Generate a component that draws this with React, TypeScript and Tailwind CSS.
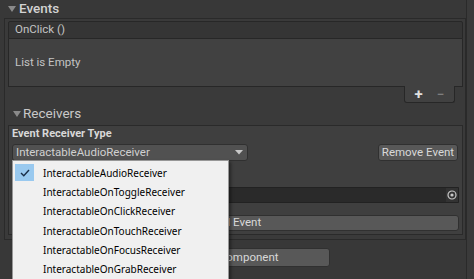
import React from "react";

const Tri = ({ className = "" }: { className?: string }) => (
  <svg width="8" height="7" viewBox="0 0 8 7" className={className}>
    <path d="M0 0 L8 0 L4 6 Z" fill="#8a8a8a" />
  </svg>
);

const items = [
  "InteractableAudioReceiver",
  "InteractableOnToggleReceiver",
  "InteractableOnClickReceiver",
  "InteractableOnTouchReceiver",
  "InteractableOnFocusReceiver",
  "InteractableOnGrabReceiver",
];

export default function App() {
  return (
    <div
      className="relative w-[474px] h-[279px] overflow-hidden bg-[#383838] text-[#c4c4c4]"
      style={{ fontFamily: "Roboto, 'Liberation Sans', sans-serif" }}
    >
      <div className="flex h-full">
        <div className="flex flex-col w-[466px]">
          {/* Events header */}
          <div className="h-[18px] flex items-center pl-[8px] gap-[3px]">
            <Tri />
            <span className="text-[13.5px] font-medium text-[#d2d2d2] leading-none">Events</span>
          </div>
          {/* outer box */}
          <div className="ml-[4px] h-[222px] border border-[#2a2a2a] bg-[#3a3a3a] flex flex-col pl-[3px] pr-[2px] pt-[2px]">
            {/* OnClick list */}
            <div className="h-[18px] bg-[#353535] border border-[#272727] rounded-t-[2px] flex items-center pl-[6px] text-[11.5px]">
              OnClick ()
            </div>
            <div className="h-[48px] bg-[#414141] border-l border-r border-b border-[#272727] flex items-center pl-[6px] text-[11.5px]">
              List is Empty
            </div>
            <div className="flex justify-end pr-[8px]">
              <div className="w-[51px] h-[17px] bg-[#414141] border-l border-r border-b border-[#272727] rounded-b-[3px] flex items-center justify-center gap-[14px] -mt-px">
                <span className="text-[#e0e0e0] text-[15px] leading-none font-bold">+</span>
                <span className="text-[#8a8a8a] text-[14px] leading-none">−</span>
              </div>
            </div>
            {/* Receivers header */}
            <div className="h-[20px] flex items-center pl-[5px] gap-[2px] mt-[1px]">
              <Tri />
              <span className="text-[13.5px] text-[#c8c8c8] leading-none">Receivers</span>
            </div>
            {/* inner box */}
            <div className="h-[110px] mt-[1px] bg-[#3f3f3f] border border-[#2a2a2a] flex flex-col pl-[3px] pr-[3px]">
              <div className="h-[17px] flex items-end pb-[1px] text-[11px] font-bold text-[#d8d8d8] whitespace-nowrap">
                Event Receiver Type
              </div>
              <div className="flex items-center h-[17px] mt-[1px]">
                <div className="w-[236px] shrink-0 h-[17px] bg-[#515151] border border-[#303030] rounded-[3px] flex items-center justify-between pl-[3px] pr-[4px] text-[11.5px] text-[#d0d0d0]">
                  <span className="whitespace-nowrap">InteractableAudioReceiver</span>
                  <svg width="8" height="5" viewBox="0 0 8 5">
                    <path d="M0 0 L8 0 L4 4.5 Z" fill="#c8c8c8" />
                  </svg>
                </div>
                <div className="flex-1" />
                <div className="w-[80px] shrink-0 whitespace-nowrap h-[17px] bg-[#585858] border border-[#303030] rounded-[3px] flex items-center justify-center text-[11.5px] text-[#d8d8d8] mr-[1px]">
                  Remove Event
                </div>
              </div>
              <div className="h-[26px]" />
              <div className="flex items-center h-[16px]">
                <div className="w-[100px]" />
                <div className="flex-1 h-[16px] bg-[#2a2a2a] border border-[#222] rounded-l-[3px] flex items-center justify-between pl-[8px] text-[11.5px] text-[#c8c8c8]">
                  <span className="whitespace-nowrap">None (Audio Clip)</span>
                  <span className="w-[12px] h-[14px] bg-[#333] flex items-center justify-center">
                    <svg width="10" height="10" viewBox="0 0 10 10">
                      <circle cx="5" cy="5" r="4" fill="none" stroke="#c8c8c8" strokeWidth="1.2" />
                      <circle cx="5" cy="5" r="1.6" fill="#c8c8c8" />
                    </svg>
                  </span>
                </div>
              </div>
              <div className="h-[12px]" />
              <div className="h-[16px] bg-[#585858] border border-[#303030] rounded-[3px] flex items-center justify-center text-[11.5px] text-[#d8d8d8]">
                Add Event
              </div>
            </div>
          </div>
          {/* Add Component */}
          <div className="flex justify-center mt-[8px] pl-[8px]">
            <div className="w-[186px] h-[19px] bg-[#585858] border border-[#303030] rounded-[3px] flex items-center justify-center text-[11.5px] text-[#d8d8d8]">
              Add Component
            </div>
          </div>
        </div>
        <div className="w-[8px] border-l border-[#2a2a2a] bg-[#3a3a3a]" />
      </div>

      {/* Popup */}
      <div
        className="absolute left-[12px] top-[160px] w-[217px] h-[130px] bg-[#f0f0f0] border border-[#979797] shadow-[2px_2px_3px_rgba(0,0,0,0.4)] pt-[2px] pl-[2px]"
        style={{ fontFamily: "'Noto Sans', 'Open Sans', sans-serif" }}
      >
        {items.map((t, i) => (
          <div key={t} className="h-[19.3px] flex items-center">
            <div className={`w-[19px] h-[17px] flex items-center justify-center ${i === 0 ? "bg-[#99c9ef]" : ""}`}>
              {i === 0 && (
                <svg width="10" height="8" viewBox="0 0 10 8">
                  <path d="M1 4 L3.8 6.8 L9 1" fill="none" stroke="#1a2e48" strokeWidth="1.4" />
                </svg>
              )}
            </div>
            <span className="ml-[9px] text-[10px] text-black leading-none whitespace-nowrap">{t}</span>
          </div>
        ))}
      </div>
    </div>
  );
}
